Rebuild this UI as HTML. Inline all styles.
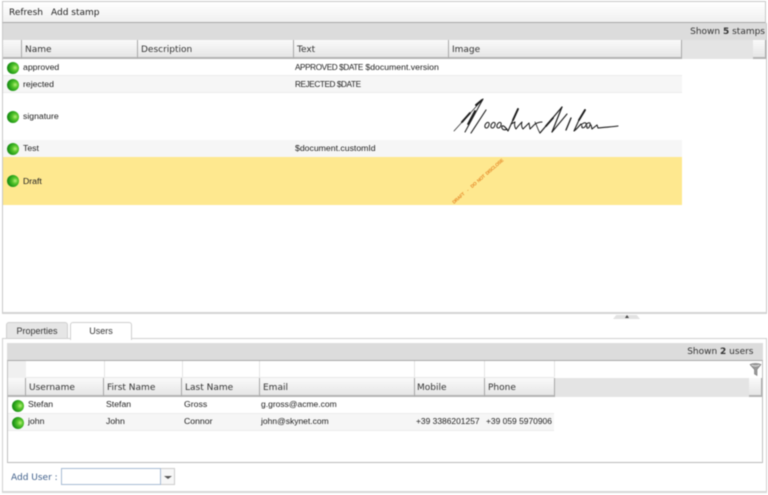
<!DOCTYPE html>
<html>
<head>
<meta charset="utf-8">
<style>
html,body{margin:0;padding:0;width:768px;height:495px;overflow:hidden;background:#fff}
body{position:relative;font-family:"Liberation Sans",sans-serif;font-size:9px;color:#222;filter:blur(.4px)}
.a{position:absolute;box-sizing:border-box;white-space:nowrap}
.h{background:linear-gradient(#fafafa,#e6e6e6);border-right:1px solid #a8a8a8;border-bottom:2px solid #b4b4b4;font-family:"DejaVu Sans",sans-serif;font-size:9px;color:#333;padding-left:3px;line-height:20px}
.t{font-size:8.7px;color:#222;line-height:12px}
.c{font-size:8.2px;letter-spacing:-.4px}
.d{font-family:"DejaVu Sans",sans-serif;font-size:9px;color:#333;line-height:12px}
.b{width:12px;height:12px;border-radius:50%;background:radial-gradient(circle at 68% 48%,#b8f07a 0,#56c52c 28%,#229a18 62%,#10700e 100%)}
</style>
</head>
<body>
<!-- top panel -->
<div class="a" style="left:2px;top:1px;width:764px;height:22px;border:1px solid #c8c8c8;border-bottom:1px solid #aaa;background:linear-gradient(#fff,#f0f0f0)"></div>
<div class="a d" style="left:9px;top:7px;color:#222">Refresh</div>
<div class="a d" style="left:51px;top:7px;color:#222">Add stamp</div>
<div class="a" style="left:2px;top:23px;width:765px;height:291px;border:1px solid #c8c8c8;border-top:0;border-bottom:2px solid #d4d4d4"></div>
<div class="a" style="left:3px;top:23px;width:763px;height:17px;background:#dcdcdc"></div>
<div class="a d" style="right:3px;top:26px">Shown <b>5</b> stamps</div>

<div class="a h" style="left:3px;top:40px;width:19px;height:19px"></div>
<div class="a h" style="left:22px;top:40px;width:116px;height:19px">Name</div>
<div class="a h" style="left:138px;top:40px;width:156px;height:19px">Description</div>
<div class="a h" style="left:294px;top:40px;width:155px;height:19px">Text</div>
<div class="a h" style="left:449px;top:40px;width:233px;height:19px">Image</div>
<div class="a" style="left:682px;top:40px;width:71px;height:19px;background:#e4e4e4"></div>
<div class="a h" style="left:753px;top:40px;width:13px;height:19px"></div>

<div class="a" style="left:3px;top:59px;width:679px;height:17px;border-bottom:1px solid #ececec"></div>
<div class="a" style="left:3px;top:76px;width:679px;height:17px;background:#f6f6f6;border-bottom:1px solid #ececec"></div>
<div class="a" style="left:3px;top:140px;width:679px;height:17px;background:#f6f6f6"></div>
<div class="a" style="left:3px;top:157px;width:679px;height:48px;background:#fee88f"></div>

<div class="a b" style="left:7px;top:62px"></div>
<div class="a b" style="left:7px;top:79px"></div>
<div class="a b" style="left:7px;top:111px"></div>
<div class="a b" style="left:7px;top:143px"></div>
<div class="a b" style="left:7px;top:175px"></div>

<div class="a t" style="left:23px;top:61px">approved</div>
<div class="a t" style="left:23px;top:78px">rejected</div>
<div class="a t" style="left:23px;top:110px">signature</div>
<div class="a t" style="left:23px;top:142px">Test</div>
<div class="a t" style="left:23px;top:175px">Draft</div>
<div class="a t" style="left:295px;top:61px"><span class="c">APPROVED $DATE</span> $document.version</div>
<div class="a t" style="left:295px;top:78px"><span class="c">REJECTED $DATE</span></div>
<div class="a t" style="left:295px;top:142px">$document.customId</div>

<svg class="a" style="left:0;top:0" width="768" height="495" viewBox="0 0 768 495">
<g fill="none" stroke="#1c1c1c" stroke-linecap="round" stroke-linejoin="round">
<!-- first W -->
<path stroke-width=".7" d="M454 131L483 99"/>
<path stroke-width="2" d="M462 122L470 113"/>
<path stroke-width="2" d="M476 105L482 100"/>
<path stroke-width="1" d="M483 99L465 132"/>
<path stroke-width="1.8" d="M475 111L468 124"/>
<path stroke-width="1.1" d="M471 133L486 110"/>
<!-- oodrow -->
<path stroke-width="1" d="M485 125C487 121 490 122 489 125C488 129 484 129 485 125M491 125C493 121 496 122 495 125C494 129 490 129 491 125M497 125C499 121 502 122 501 125C500 129 496 129 497 125"/>
<path stroke-width="1.9" d="M518 109L513 120"/>
<path stroke-width="1.1" d="M513 120L508 131C506 128 504 125 502 126C501 129 504 131 507 129"/>
<path stroke-width="1" d="M511 124L515 122C514 125 515 128 516 129C518 126 520 124 522 122C521 125 522 128 523 129C525 127 527 125 529 123L530 129L535 124C537 123 539 122 542 122"/>
<!-- second W -->
<path stroke-width=".8" d="M535 122C537 126 538 130 540 133"/>
<path stroke-width="1.2" d="M540 133L562 107"/>
<path stroke-width="1.8" d="M546 126L553 118"/>
<path stroke-width="1.2" d="M562 107L552 132"/>
<path stroke-width="1.1" d="M552 132L567 114"/>
<!-- ilson -->
<path stroke-width="1.3" d="M571 118L566 130"/>
<path stroke-width="1.9" d="M585 110L579 120"/>
<path stroke-width="1.1" d="M579 120L574 131C577 129 579 126 581 124"/>
<path stroke-width="1.1" d="M581 125C584 122 587 122 586 125C585 128 581 129 582 126M586 125C588 122 591 122 590 125C589 129 586 129 587 126M591 125L592 129L597 125L598 128"/>
<path stroke-width="1.1" d="M598 128C605 127 612 127 618 126"/>
</g>
<text x="0" y="0" transform="translate(454 204) rotate(-41)" font-family="Liberation Sans" font-size="4.7" font-weight="bold" fill="#e68a2a" textLength="66" style="white-space:pre;word-spacing:1px">DRAFT  -  DO NOT DISCLOSE</text>
</svg>

<!-- splitter -->
<div class="a" style="left:613px;top:315px;width:27px;height:4px;background:#e2e2e2;clip-path:polygon(12% 0,88% 0,100% 100%,0 100%)"></div>
<div class="a" style="left:625px;top:315px;width:0;height:0;border:2px solid transparent;border-top:0;border-bottom:3px solid #444"></div>

<!-- tabs -->
<div class="a" style="left:2px;top:338px;width:765px;height:155px;border:1px solid #d0d0d0;border-bottom:2px solid #d8d8d8"></div>
<div class="a" style="left:6px;top:322px;width:62px;height:16px;background:#e6e6e6;border:1px solid #cfcfcf;border-bottom:0;border-radius:3px 3px 0 0;text-align:center;line-height:17px;font-size:9px;color:#333">Properties</div>
<div class="a" style="left:70px;top:322px;width:62px;height:18px;background:#fff;border:1px solid #cfcfcf;border-bottom:0;border-radius:3px 3px 0 0;text-align:center;line-height:17px;font-size:9px;color:#333">Users</div>

<!-- users grid -->
<div class="a" style="left:7px;top:343px;width:756px;height:17px;background:#dcdcdc"></div>
<div class="a d" style="right:14.5px;top:346px">Shown <b>2</b> users</div>
<div class="a" style="left:7px;top:360px;width:756px;height:103px;border:1px solid #c0c0c0;border-top:1px solid #aaa;border-bottom:1px solid #bbb"></div>
<div class="a" style="left:8px;top:361px;width:18px;height:17px;background:#f0f0f0"></div>
<div class="a" style="left:104px;top:361px;width:1px;height:16px;background:#e4e4e4"></div>
<div class="a" style="left:182px;top:361px;width:1px;height:16px;background:#e4e4e4"></div>
<div class="a" style="left:259px;top:361px;width:1px;height:16px;background:#e4e4e4"></div>
<div class="a" style="left:414px;top:361px;width:1px;height:16px;background:#e4e4e4"></div>
<div class="a" style="left:484px;top:361px;width:1px;height:16px;background:#e4e4e4"></div>
<div class="a" style="left:554px;top:361px;width:1px;height:16px;background:#e4e4e4"></div>
<div class="a" style="left:26px;top:377px;width:528px;height:1px;background:#e8e8e8"></div>

<div class="a h" style="left:8px;top:378px;width:18px;height:19px"></div>
<div class="a h" style="left:26px;top:378px;width:78px;height:19px">Username</div>
<div class="a h" style="left:104px;top:378px;width:78px;height:19px">First Name</div>
<div class="a h" style="left:182px;top:378px;width:78px;height:19px">Last Name</div>
<div class="a h" style="left:260px;top:378px;width:155px;height:19px">Email</div>
<div class="a h" style="left:415px;top:378px;width:70px;height:19px;padding-left:2px">Mobile</div>
<div class="a h" style="left:485px;top:378px;width:70px;height:19px">Phone</div>
<div class="a" style="left:555px;top:378px;width:194px;height:19px;background:#e4e4e4"></div>
<div class="a h" style="left:749px;top:378px;width:13px;height:19px"></div>
<svg class="a" style="left:749px;top:363px" width="13" height="14" viewBox="0 0 13 14">
<path d="M1 1.5C4 0 9 0 12 1.5L8 6.5V12.5L5.5 11V6.5Z" fill="#999" stroke="#777" stroke-width=".6"/>
<path d="M2.5 2C5 3.2 8 3.2 10.5 2" fill="none" stroke="#eee" stroke-width=".8"/>
</svg>

<div class="a" style="left:8px;top:397px;width:546px;height:17px;border-bottom:1px solid #ececec"></div>
<div class="a" style="left:8px;top:414px;width:546px;height:17px;background:#f6f6f6;border-bottom:1px solid #ececec"></div>
<div class="a b" style="left:12px;top:400px"></div>
<div class="a b" style="left:12px;top:417px"></div>

<div class="a t" style="left:28px;top:398px">Stefan</div>
<div class="a t" style="left:106px;top:398px">Stefan</div>
<div class="a t" style="left:184px;top:398px">Gross</div>
<div class="a t" style="left:261px;top:398px;font-size:8.5px">g.gross@acme.com</div>
<div class="a t" style="left:28px;top:415px">john</div>
<div class="a t" style="left:106px;top:415px">John</div>
<div class="a t" style="left:184px;top:415px">Connor</div>
<div class="a t" style="left:261px;top:415px;font-size:8.5px">john@skynet.com</div>
<div class="a t" style="left:416px;top:415px;font-size:8.45px">+39 3386201257</div>
<div class="a t" style="left:486px;top:415px;font-size:8.45px">+39 059 5970906</div>

<!-- add user -->
<div class="a d" style="left:11px;top:472px;color:#3f5f8a">Add User :</div>
<div class="a" style="left:61px;top:468px;width:100px;height:17px;border:1px solid #a8bcd4;background:#fff"></div>
<div class="a" style="left:161px;top:468px;width:14px;height:17px;border:1px solid #ccc;border-left:0;background:#f7f7f7"></div>
<div class="a" style="left:164px;top:476px;width:0;height:0;border:4px solid transparent;border-bottom:0;border-top:3px solid #555"></div>
</body>
</html>
